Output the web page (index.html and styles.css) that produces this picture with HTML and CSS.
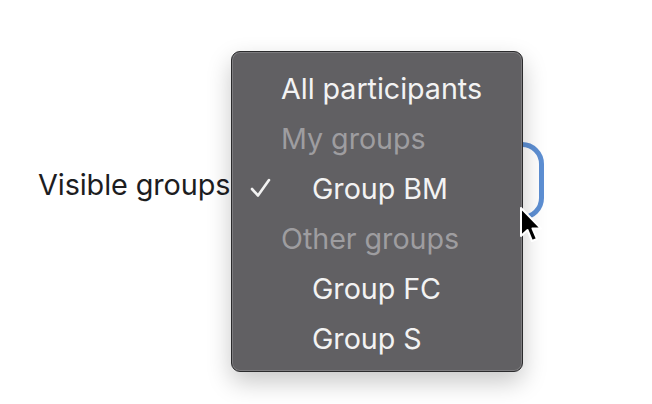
FILE: index.html
```html
<!DOCTYPE html>
<html>
<head>
<meta charset="utf-8">
<link rel="stylesheet" href="styles.css">
</head>
<body>
<div class="page">
  <div class="field">
    <label class="label">Visible groups</label>
    <div class="select"></div>
  </div>
  <div class="menu">
    <div class="item">All participants</div>
    <div class="item header">My groups</div>
    <div class="item sub checked">
      <svg class="check" width="22" height="20" viewBox="0 0 22 20"><polyline points="2,11 8,17.5 19,2" fill="none" stroke="#f2f2f2" stroke-width="2.6" stroke-linecap="round" stroke-linejoin="round"/></svg>
      Group BM
    </div>
    <div class="item header">Other groups</div>
    <div class="item sub">Group FC</div>
    <div class="item sub">Group S</div>
  </div>
  <svg class="cursor" width="28" height="40" viewBox="0 0 28 40"><path d="M2,1 L2,29 L8.5,23 L13,34 L18,32 L13.5,21.5 L22,21.5 Z" fill="#000" stroke="#fff" stroke-width="2" stroke-linejoin="round"/></svg>
</div>
</body>
</html>
```

FILE: styles.css
```css
html, body {
  margin: 0;
  padding: 0;
  background: #ffffff;
}
body {
  width: 652px;
  height: 404px;
  overflow: hidden;
  font-family: Inter, "Liberation Sans", sans-serif;
}
.page {
  position: relative;
  width: 652px;
  height: 404px;
}
.field {
  display: flex;
  align-items: center;
  padding: 142px 0 0 38px;
}
.label {
  font-size: 28.8px;
  line-height: 34px;
  padding-top: 8px;
  color: #1d1d1f;
  letter-spacing: -0.1px;
}
.select {
  margin-left: 6px;
  width: 298px;
  height: 68px;
  border: 5px solid #5d8fd3;
  border-radius: 22px;
  box-sizing: content-box;
}
.menu {
  position: absolute;
  left: 231px;
  top: 51px;
  width: 292px;
  height: 321px;
  box-sizing: border-box;
  background: #616063;
  border: 1px solid #2b2b2d;
  border-radius: 9px;
  box-shadow: inset 0 0 0 1px rgba(255,255,255,0.18), 0 10px 24px rgba(0,0,0,0.22);
  display: flex;
  flex-direction: column;
  padding-top: 11px;
}
.item {
  height: 50px;
  flex: none;
  display: flex;
  align-items: center;
  padding-left: 49px;
  font-size: 28.7px;
  color: #f3f3f3;
  position: relative;
  letter-spacing: -0.05px;
}
.item.header {
  color: #9e9da0;
}
.item.sub {
  padding-left: 80px;
}
.check {
  position: absolute;
  left: 18px;
  top: 15px;
}
.cursor {
  position: absolute;
  left: 519px;
  top: 207px;
}
```
